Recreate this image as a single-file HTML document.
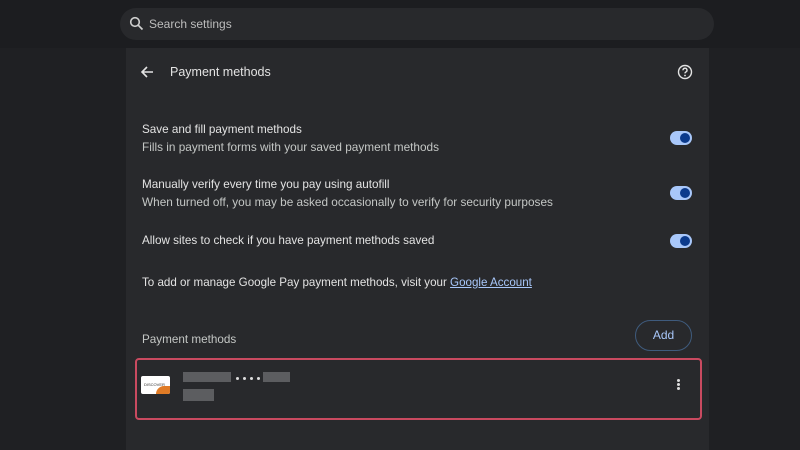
<!DOCTYPE html>
<html><head><style>
*{margin:0;padding:0;box-sizing:border-box}
body{width:800px;height:450px;background:#1f2023;font-family:"Liberation Sans",sans-serif;position:relative;overflow:hidden;color:#e3e3e3}
.top{position:absolute;left:0;top:0;width:800px;height:48px;background:#1c1d20}
.search{position:absolute;left:120px;top:8px;width:594px;height:32px;border-radius:16px;background:#28292c;color:#bdbdbd;font-size:12px;line-height:32px;padding-left:29px}
.panel{position:absolute;left:126px;top:48px;width:583px;height:402px;background:#28292c}
.t{position:absolute;font-size:11.7px;color:#e3e3e3;white-space:nowrap}
.s{position:absolute;font-size:11.8px;color:#c4c7c5;white-space:nowrap}
.tg{position:absolute;left:670px;width:22px;height:14px;border-radius:7px;background:#a8c7fa}
.tg:after{content:"";position:absolute;right:2px;top:2px;width:10px;height:10px;border-radius:5px;background:#0b3a8c}
.blur{position:absolute;background:#5c5d60}
.d{position:absolute;top:377px;width:3px;height:3px;border-radius:2px;background:#ddd}
</style></head><body>
<div class="top"></div>
<div class="search">Search settings</div>
<svg style="position:absolute;left:129px;top:16px" width="15" height="15" viewBox="0 0 15 15"><circle cx="6" cy="6" r="4.3" fill="none" stroke="#d0d0d0" stroke-width="1.6"/><path d="M9.2 9.2L13.5 13.5" stroke="#d0d0d0" stroke-width="1.7"/></svg>
<div class="panel"></div>
<svg style="position:absolute;left:140px;top:65px" width="14" height="14" viewBox="0 0 14 14"><path d="M13 7H2M7 2L2 7l5 5" fill="none" stroke="#e3e3e3" stroke-width="1.6"/></svg>
<div class="t" style="left:170px;top:65px;font-size:12.5px">Payment methods</div>
<svg style="position:absolute;left:677px;top:64px" width="16" height="16" viewBox="0 0 16 16"><circle cx="8" cy="8" r="6.5" fill="none" stroke="#e3e3e3" stroke-width="1.4"/><path d="M6 6.3a2 2 0 1 1 2.7 1.8c-.5.3-.7.6-.7 1.3" fill="none" stroke="#e3e3e3" stroke-width="1.4"/><circle cx="8" cy="11.5" r=".9" fill="#e3e3e3"/></svg>
<div class="t" style="left:142px;top:123px">Save and fill payment methods</div>
<div class="s" style="left:142px;top:140px">Fills in payment forms with your saved payment methods</div>
<div class="tg" style="top:131px"></div>
<div class="t" style="left:142px;top:178px">Manually verify every time you pay using autofill</div>
<div class="s" style="left:142px;top:195px">When turned off, you may be asked occasionally to verify for security purposes</div>
<div class="tg" style="top:186px"></div>
<div class="t" style="left:142px;top:234px">Allow sites to check if you have payment methods saved</div>
<div class="tg" style="top:234px"></div>
<div class="t" style="left:142px;top:276px;font-size:11.6px">To add or manage Google Pay payment methods, visit your <span style="color:#a8c7fa;text-decoration:underline">Google Account</span></div>
<div class="t" style="left:142px;top:333px;color:#c4c7c5">Payment methods</div>
<div style="position:absolute;left:635px;top:320px;width:57px;height:31px;border:1px solid #3f5b7d;border-radius:16px;color:#a8c7fa;font-size:12px;text-align:center;line-height:29px">Add</div>
<div style="position:absolute;left:135px;top:358px;width:567px;height:62px;border:2px solid #c94a60;border-radius:4px"></div>
<div style="position:absolute;left:141px;top:376px;width:29px;height:18px;background:#fff;border-radius:2px;overflow:hidden"><div style="position:absolute;right:0;bottom:0;width:14px;height:8px;background:#e07b26;border-top-left-radius:12px"></div><div style="position:absolute;left:3px;top:6px;font-size:4px;color:#333">DISCOVER</div></div>
<div class="blur" style="left:183px;top:372px;width:48px;height:10px"></div>
<div class="d" style="left:236px"></div><div class="d" style="left:243px"></div><div class="d" style="left:250px"></div><div class="d" style="left:257px"></div>
<div class="blur" style="left:263px;top:372px;width:27px;height:10px"></div>
<div class="blur" style="left:183px;top:389px;width:31px;height:12px"></div>
<div style="position:absolute;left:677px;top:379px;width:3px;height:3px;background:#ddd;border-radius:2px;box-shadow:0 4px 0 #ddd,0 8px 0 #ddd"></div>
</body></html>
